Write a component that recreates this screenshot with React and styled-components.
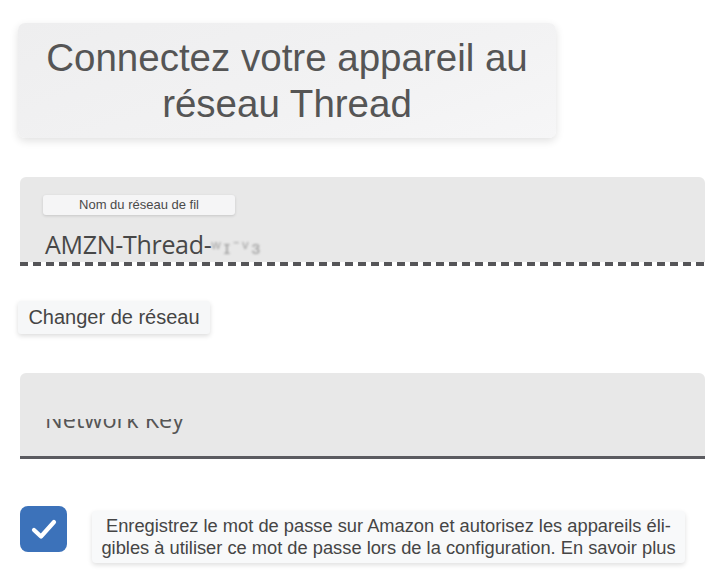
import React from "react";
import styled, { createGlobalStyle } from "styled-components";

const GlobalStyle = createGlobalStyle`
  html, body {
    margin: 0;
    padding: 0;
    background: #ffffff;
  }
  body {
    font-family: "Liberation Sans", Arial, sans-serif;
    color: #4a4a4a;
  }
`;

const Page = styled.div`
  width: 725px;
  height: 579px;
  overflow: hidden;
  padding: 23px 20px 0 18px;
  box-sizing: border-box;
  display: flex;
  flex-direction: column;
`;

const TitleCard = styled.div`
  width: 538px;
  height: 115px;
  box-sizing: border-box;
  border-radius: 7px;
  background: linear-gradient(160deg, #eeeeef 0%, #f2f2f3 60%, #f6f6f7 100%);
  box-shadow: 0 3px 8px rgba(0, 0, 0, 0.12);
  display: flex;
  align-items: center;
  justify-content: center;
  text-align: center;
  font-size: 38.5px;
  line-height: 46px;
  color: #555555;
`;

const Field = styled.div`
  margin-top: ${(p) => p.$top}px;
  margin-left: 2px;
  width: 685px;
  height: ${(p) => p.$height}px;
  box-sizing: border-box;
  background: #e8e8e8;
  border-radius: 6px 6px 0 0;
  padding: ${(p) => p.$pad};
  display: flex;
  flex-direction: column;
  overflow: hidden;
`;

const DashedLine = styled.div`
  margin-left: 2px;
  width: 685px;
  height: 4px;
  background: repeating-linear-gradient(
    90deg,
    #555558 0 8px,
    transparent 8px 13px
  );
`;

const SolidLine = styled.div`
  margin-left: 2px;
  width: 685px;
  height: 3px;
  background: #5b5b60;
`;

const LabelChip = styled.div`
  width: 192px;
  height: 20px;
  box-sizing: border-box;
  background: #f5f5f6;
  border-radius: 3px;
  box-shadow: 0 1px 3px rgba(0, 0, 0, 0.15);
  font-size: 13px;
  line-height: 20px;
  text-align: center;
  color: #4a4a4a;
`;

const Value = styled.div`
  margin-top: 14px;
  margin-left: 2px;
  font-family: "Open Sans", "Liberation Sans", sans-serif;
  font-size: 25px;
  line-height: 30px;
  color: #474747;
  white-space: nowrap;
  letter-spacing: -0.3px;
`;

const Blurred = styled.span`
  display: inline-block;
  font-size: 19px;
  color: #a0a0a0;
  filter: blur(1px);
  letter-spacing: 3px;
`;

const ClippedWindow = styled.div`
  height: 16px;
  margin-left: 2px;
  overflow: hidden;
  display: flex;
  align-items: flex-end;
`;

const KeyText = styled.div`
  font-family: "Open Sans", "Liberation Sans", sans-serif;
  font-size: 23.5px;
  line-height: 24px;
  padding-bottom: 4px;
  color: #555555;
  white-space: nowrap;
`;

const ChangeButton = styled.div`
  margin-top: 35px;
  align-self: flex-start;
  width: 192px;
  height: 33px;
  box-sizing: border-box;
  background: #f6f7f8;
  border-radius: 3px;
  box-shadow: 0 2px 5px rgba(0, 0, 0, 0.14);
  font-size: 20px;
  line-height: 33px;
  text-align: center;
  color: #454545;
`;

const ConsentRow = styled.div`
  margin-top: 47px;
  margin-left: 2px;
  display: flex;
  align-items: flex-start;
  gap: 25px;
`;

const CheckBox = styled.div`
  width: 47px;
  height: 46px;
  flex-shrink: 0;
  border-radius: 8px;
  background: #3c72ba;
  display: flex;
  align-items: center;
  justify-content: center;
`;

const ConsentText = styled.div`
  margin-top: 5px;
  width: 593px;
  height: 52px;
  box-sizing: border-box;
  background: #f8f9fa;
  border-radius: 4px;
  box-shadow: 0 2px 5px rgba(0, 0, 0, 0.13);
  display: flex;
  align-items: center;
  justify-content: center;
  text-align: center;
  font-size: 18.3px;
  line-height: 22px;
  color: #454545;
  white-space: nowrap;
`;

export default function App() {
  return (
    <>
      <GlobalStyle />
      <Page>
        <TitleCard>
          Connectez votre appareil au
          <br />
          réseau Thread
        </TitleCard>

        <Field $top={39} $height={85} $pad="18px 0 0 23px">
          <LabelChip>Nom du réseau de fil</LabelChip>
          <Value>
            AMZN-Thread-<Blurred>ʷɪ⁻ᵛɜ</Blurred>
          </Value>
        </Field>
        <DashedLine />

        <ChangeButton>Changer de réseau</ChangeButton>

        <Field $top={39} $height={83} $pad="46px 0 0 23px">
          <ClippedWindow>
            <KeyText>Network Key</KeyText>
          </ClippedWindow>
        </Field>
        <SolidLine />

        <ConsentRow>
          <CheckBox>
            <svg width="26" height="22" viewBox="0 0 26 22">
              <path
                d="M3 12 L10 18.5 L23 4"
                fill="none"
                stroke="#ffffff"
                strokeWidth="4.2"
                strokeLinecap="round"
                strokeLinejoin="round"
              />
            </svg>
          </CheckBox>
          <ConsentText>
            Enregistrez le mot de passe sur Amazon et autorisez les appareils éli-
            <br />
            gibles à utiliser ce mot de passe lors de la configuration. En savoir plus
          </ConsentText>
        </ConsentRow>
      </Page>
    </>
  );
}
